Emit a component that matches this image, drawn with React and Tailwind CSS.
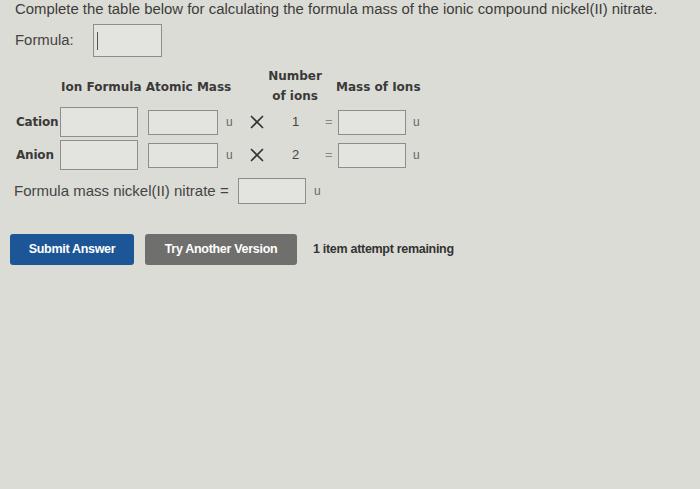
import React from 'react';

const boldFont = { fontFamily: '"DejaVu Sans", Verdana, sans-serif' };

function Box({ className = '' }) {
  return <div className={`border border-[#8d8d8a] bg-[#e3e3df] ${className}`} />;
}

function Times() {
  return (
    <svg width="14" height="14" viewBox="0 0 14 14" className="shrink-0">
      <path d="M1.5 1.5 L12.5 12.5 M12.5 1.5 L1.5 12.5" stroke="#333" strokeWidth="1.7" strokeLinecap="round" />
    </svg>
  );
}

function IonRow({ label, count }) {
  return (
    <div className="flex items-center h-[30px]">
      <span className="w-[44px] font-bold text-[12px] text-[#3a3a3a] tracking-[-0.2px]" style={boldFont}>
        {label}
      </span>
      <Box className="w-[78px] h-[30px]" />
      <Box className="ml-[10px] w-[70px] h-[25px]" />
      <span className="ml-[8px] w-[24px] text-[12px] text-[#666]">u</span>
      <Times />
      <span className="ml-[28px] w-[13px] text-[13px] text-[#444]">{count}</span>
      <span className="ml-[20px] w-[13px] text-[13px] text-[#888]">=</span>
      <Box className="w-[68px] h-[25px]" />
      <span className="ml-[7px] text-[12px] text-[#666]">u</span>
    </div>
  );
}

export default function App() {
  return (
    <div className="w-[700px] h-[489px] bg-[#dcdcd6] text-[#444]" style={{ fontFamily: '"Liberation Sans", Arial, sans-serif' }}>
      <div className="pl-[15px] pt-[1px] text-[14.9px] text-[#3c3c3c] leading-[16px]">
        Complete the table below for calculating the formula mass of the ionic compound nickel(II) nitrate.
      </div>

      <div className="flex items-center pl-[15px] mt-[7px]">
        <span className="text-[14.9px] text-[#444] w-[78px]">Formula:</span>
        <div className="w-[69px] h-[33px] border border-[#8d8d8a] bg-[#e3e3df] flex items-center pl-[3px]">
          <div className="w-px h-[18px] bg-[#555]" />
        </div>
      </div>

      <div className="pl-[16px] mt-[9px]">
        <div className="flex items-center h-[40px] font-bold text-[12px] text-[#3a3a3a]" style={boldFont}>
          <span className="ml-[45px] w-[207px] pt-[2px]">Ion Formula Atomic Mass</span>
          <span className="w-[54px] text-center leading-[20px]">Number<br />of ions</span>
          <span className="ml-[14px] pt-[2px]">Mass of Ions</span>
        </div>
        <div className="mt-[1px]">
          <IonRow label="Cation" count="1" />
        </div>
        <div className="mt-[3px]">
          <IonRow label="Anion" count="2" />
        </div>
      </div>

      <div className="flex items-center pl-[14px] mt-[8px]">
        <span className="text-[15px] text-[#444] w-[224px]">Formula mass nickel(II) nitrate =</span>
        <Box className="w-[68px] h-[26px]" />
        <span className="ml-[8px] text-[12px] text-[#666]">u</span>
      </div>

      <div className="flex items-center pl-[10px] mt-[30px]">
        <button className="w-[124px] h-[31px] rounded-[3px] bg-[#1d5696] text-white font-bold text-[12.5px] tracking-[-0.3px]">
          Submit Answer
        </button>
        <button className="ml-[11px] w-[152px] h-[31px] rounded-[3px] bg-[#6f6f6d] text-white font-bold text-[12.5px] tracking-[-0.3px]">
          Try Another Version
        </button>
        <span className="ml-[16px] font-bold text-[12.5px] text-[#333] tracking-[-0.3px]">1 item attempt remaining</span>
      </div>
    </div>
  );
}
